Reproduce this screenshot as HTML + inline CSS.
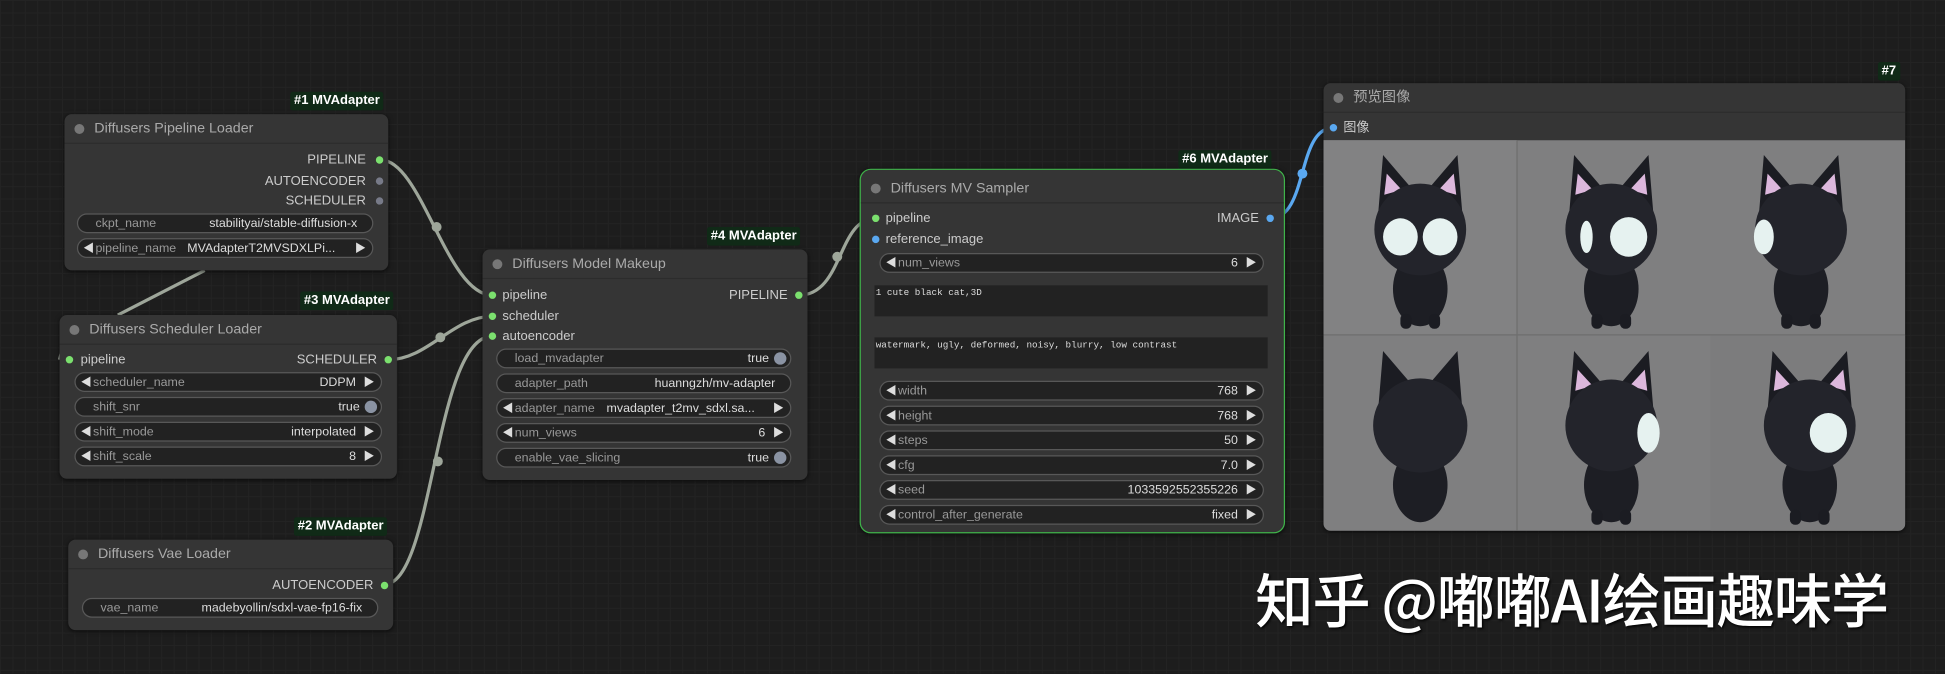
<!DOCTYPE html>
<html><head><meta charset="utf-8"><style>
*{box-sizing:border-box;margin:0;padding:0}
html,body{width:1945px;height:673px;overflow:hidden;background:#1b1b1b}
#w{position:absolute;left:0;top:0;width:1568px;height:543px;transform:scale(1.2404);transform-origin:0 0;font-family:"Liberation Sans","Noto Sans CJK SC",sans-serif;font-size:10.5px;color:#ccc;
background-color:#1d1d1d;background-image:linear-gradient(#232323 1px,transparent 1px),linear-gradient(90deg,#232323 1px,transparent 1px);background-size:10px 10px}
.n{position:absolute;background:#353535;border-radius:6px;box-shadow:0 1px 4px rgba(0,0,0,.6)}
.t{position:absolute;left:0;right:0;top:0;height:24px;border-bottom:1px solid #2c2c2c;color:#aaa;font-size:11.5px;line-height:24px;padding-left:24px}
.t:before{content:"";position:absolute;left:8px;top:8px;width:8px;height:8px;border-radius:50%;background:#777}
.b{position:absolute;background:#102a17;color:#fff;font-weight:bold;font-size:10.5px;height:15px;line-height:15px;padding:0 3px;border-radius:2px}
.r{position:absolute;height:14px;line-height:14px;font-size:10.5px;color:#ccc}
.d{position:absolute;width:6px;height:6px;border-radius:50%;background:#7be06e}
.g{background:#777a88}.bl{background:#5aa8f0}
.wd{position:absolute;height:16px;border:1px solid #585858;border-radius:8px;background:#222;font-size:10px;line-height:15px;color:#999}
.wd .l{position:absolute;left:14px}.wd .v{position:absolute;right:20px;color:#ddd}
.wd.a .l{left:14px}.wd.a:before{content:"◀";position:absolute;left:4px;color:#ddd;font-size:9px}
.wd.a:after{content:"▶";position:absolute;right:5px;color:#ddd;font-size:9px}
.wd.bo .v{right:17px}.wd.bo:after{content:"";position:absolute;right:3px;top:2px;width:10px;height:10px;border-radius:50%;background:#8a93a3}
.ta{position:absolute;background:#222;font-family:"Liberation Mono",monospace;font-size:7.5px;color:#ddd;padding:3px 1px}
</style></head><body><div id="w">
<svg width="1568" height="543" style="position:absolute;left:0;top:0" fill="none">
<g stroke="#9ea69a" stroke-width="2.6">
<path d="M307 129 C340 129 360 238 397 238"/>
<path d="M313 290 C345 290 365 255 397 255"/>
<path d="M310 471 C350 471 350 271 397 271"/>
<path d="M644 238 C680 238 675 176 706 176"/>
<path d="M165 218 L95 254"/>
<path d="M50 282 L48 290"/>
</g>
<path d="M1024 176 C1055 176 1045 103 1075 103" stroke="#5aa8f0" stroke-width="2.6"/>
<g fill="#9ea69a"><circle cx="352" cy="183" r="4"/><circle cx="355" cy="272" r="4"/><circle cx="353" cy="372" r="4"/><circle cx="675" cy="207" r="4"/></g>
<circle cx="1050" cy="140" r="4" fill="#5aa8f0"/>
</svg>

<div class="b" style="left:234px;top:74px">#1 MVAdapter</div>
<div class="n" style="left:52px;top:92px;width:261px;height:126px">
<div class="t">Diffusers Pipeline Loader</div>
<div class="r" style="right:18px;top:30px">PIPELINE</div><div class="d" style="right:4px;top:34px"></div>
<div class="r" style="right:18px;top:47px">AUTOENCODER</div><div class="d g" style="right:4px;top:51px"></div>
<div class="r" style="right:18px;top:63px">SCHEDULER</div><div class="d g" style="right:4px;top:67px"></div>
<div class="wd" style="left:10px;top:80px;width:239px"><span class="l">ckpt_name</span><span class="v" style="right:12px">stabilityai/stable-diffusion-x</span></div>
<div class="wd a" style="left:10px;top:100px;width:239px"><span class="l">pipeline_name</span><span class="v" style="left:88px;right:auto">MVAdapterT2MVSDXLPi...</span></div>
</div>

<div class="b" style="left:242px;top:235px">#3 MVAdapter</div>
<div class="n" style="left:48px;top:254px;width:272px;height:132px">
<div class="t">Diffusers Scheduler Loader</div>
<div class="d" style="left:5px;top:33px"></div><div class="r" style="left:17px;top:29px">pipeline</div>
<div class="r" style="right:16px;top:29px">SCHEDULER</div><div class="d" style="right:4px;top:33px"></div>
<div class="wd a" style="left:12px;top:46px;width:248px"><span class="l">scheduler_name</span><span class="v">DDPM</span></div>
<div class="wd bo" style="left:12px;top:66px;width:248px"><span class="l">shift_snr</span><span class="v">true</span></div>
<div class="wd a" style="left:12px;top:86px;width:248px"><span class="l">shift_mode</span><span class="v">interpolated</span></div>
<div class="wd a" style="left:12px;top:106px;width:248px"><span class="l">shift_scale</span><span class="v">8</span></div>
</div>

<div class="b" style="left:237px;top:417px">#2 MVAdapter</div>
<div class="n" style="left:55px;top:435px;width:262px;height:73px">
<div class="t">Diffusers Vae Loader</div>
<div class="r" style="right:16px;top:30px">AUTOENCODER</div><div class="d" style="right:4px;top:34px"></div>
<div class="wd" style="left:11px;top:47px;width:239px"><span class="l">vae_name</span><span class="v" style="right:12px">madebyollin/sdxl-vae-fp16-fix</span></div>
</div>

<div class="b" style="left:570px;top:183px">#4 MVAdapter</div>
<div class="n" style="left:389px;top:201px;width:262px;height:186px">
<div class="t">Diffusers Model Makeup</div>
<div class="d" style="left:5px;top:34px"></div><div class="r" style="left:16px;top:30px">pipeline</div>
<div class="r" style="right:16px;top:30px">PIPELINE</div><div class="d" style="right:4px;top:34px"></div>
<div class="d" style="left:5px;top:51px"></div><div class="r" style="left:16px;top:47px">scheduler</div>
<div class="d" style="left:5px;top:67px"></div><div class="r" style="left:16px;top:63px">autoencoder</div>
<div class="wd bo" style="left:11px;top:80px;width:238px"><span class="l">load_mvadapter</span><span class="v">true</span></div>
<div class="wd" style="left:11px;top:100px;width:238px"><span class="l">adapter_path</span><span class="v" style="right:12px">huanngzh/mv-adapter</span></div>
<div class="wd a" style="left:11px;top:120px;width:238px"><span class="l">adapter_name</span><span class="v" style="left:88px;right:auto">mvadapter_t2mv_sdxl.sa...</span></div>
<div class="wd a" style="left:11px;top:140px;width:238px"><span class="l">num_views</span><span class="v">6</span></div>
<div class="wd bo" style="left:11px;top:160px;width:238px"><span class="l">enable_vae_slicing</span><span class="v">true</span></div>
</div>

<div class="b" style="left:950px;top:121px">#6 MVAdapter</div>
<div class="n" style="left:693px;top:136px;width:343px;height:294px;border:1.5px solid #3fb34a;border-radius:9px">
<div class="t" style="top:3px">Diffusers MV Sampler</div>
<div class="d" style="left:9px;top:36px"></div><div class="r" style="left:20px;top:32px">pipeline</div>
<div class="r" style="right:20px;top:32px">IMAGE</div><div class="d bl" style="right:8px;top:36px"></div>
<div class="d bl" style="left:9px;top:53px"></div><div class="r" style="left:20px;top:49px">reference_image</div>
<div class="wd a" style="left:15px;top:67px;width:310px"><span class="l">num_views</span><span class="v">6</span></div>
<div class="ta" style="left:11px;top:93px;width:317px;height:25px">1 cute black cat,3D</div>
<div class="ta" style="left:11px;top:135px;width:317px;height:25px">watermark, ugly, deformed, noisy, blurry, low contrast</div>
<div class="wd a" style="left:15px;top:170px;width:310px"><span class="l">width</span><span class="v">768</span></div>
<div class="wd a" style="left:15px;top:190px;width:310px"><span class="l">height</span><span class="v">768</span></div>
<div class="wd a" style="left:15px;top:210px;width:310px"><span class="l">steps</span><span class="v">50</span></div>
<div class="wd a" style="left:15px;top:230px;width:310px"><span class="l">cfg</span><span class="v">7.0</span></div>
<div class="wd a" style="left:15px;top:250px;width:310px"><span class="l">seed</span><span class="v">1033592552355226</span></div>
<div class="wd a" style="left:15px;top:270px;width:310px"><span class="l">control_after_generate</span><span class="v">fixed</span></div>
</div>

<div class="b" style="left:1514px;top:50px">#7</div>
<div class="n" style="left:1067px;top:67px;width:469px;height:361px;overflow:hidden">
<div class="t">预览图像</div>
<div class="d bl" style="left:5px;top:33px"></div><div class="r" style="left:16px;top:29px">图像</div>
<svg style="position:absolute;left:0;top:46px" width="469" height="315" viewBox="0 0 469 315">
<rect width="469" height="315" fill="#7f7f80"/>
<rect x="0" y="0" width="156" height="157" fill="#828283"/><rect x="312" y="157" width="157" height="158" fill="#7c7c7d"/>
<line x1="156" y1="0" x2="156" y2="315" stroke="#6e6e6e"/><line x1="0" y1="157" x2="469" y2="157" stroke="#6e6e6e"/>
<defs>
<g id="c"><ellipse cx="0" cy="38" rx="22" ry="30" fill="#1d1e24"/><rect x="-16" y="58" width="9" height="12" rx="4" fill="#1b1c22"/><rect x="7" y="58" width="9" height="12" rx="4" fill="#1b1c22"/>
<path d="M-34 -22 L-30 -70 L-6 -42 Z M34 -22 L30 -70 L6 -42 Z" fill="#1b1c22"/><path d="M-29 -38 L-27 -55 L-15 -42 Z M29 -38 L27 -55 L15 -42 Z" fill="#dcb7dc"/>
<circle cx="0" cy="-10" r="37" fill="#23242b"/></g>
<g id="b"><ellipse cx="0" cy="38" rx="22" ry="30" fill="#1d1e24"/><path d="M-34 -22 L-30 -70 L-6 -42 Z M34 -22 L30 -70 L6 -42 Z" fill="#1b1c22"/><circle cx="0" cy="-10" r="38" fill="#23242b"/></g>
</defs>
<use href="#c" x="78" y="82"/><ellipse cx="62" cy="78" rx="14" ry="15" fill="#e6f2f0"/><ellipse cx="94" cy="78" rx="14" ry="15" fill="#e6f2f0"/>
<use href="#c" x="232" y="82"/><ellipse cx="246" cy="78" rx="15" ry="16" fill="#e6f2f0"/><ellipse cx="212" cy="78" rx="5" ry="13" fill="#e6f2f0"/>
<use href="#c" x="385" y="82"/><ellipse cx="355" cy="78" rx="8" ry="14" fill="#e6f2f0"/>
<use href="#b" x="78" y="240"/>
<use href="#c" x="232" y="240"/><ellipse cx="262" cy="236" rx="9" ry="16" fill="#e6f2f0"/>
<use href="#c" x="392" y="240"/><ellipse cx="407" cy="236" rx="15" ry="16" fill="#e6f2f0"/>
</svg>
</div>

<div style="position:absolute;left:1012px;top:447px;font-size:47px;color:#fff;font-family:'Noto Sans CJK SC','Liberation Sans',sans-serif;font-weight:500;white-space:nowrap;text-shadow:1px 1px 2px #000;letter-spacing:-1px">知乎 @嘟嘟AI绘画趣味学</div>
</div></body></html>
